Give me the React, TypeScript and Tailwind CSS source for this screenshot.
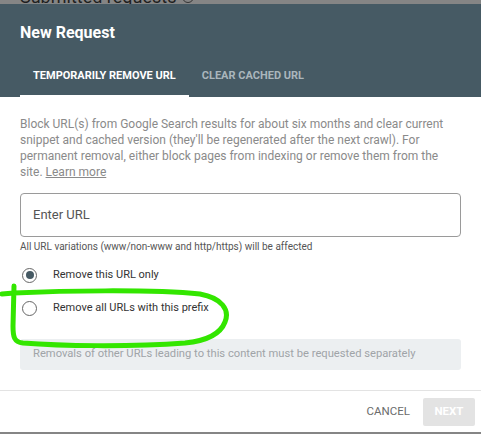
import React from 'react';

export default function App() {
  const tabs = [
    { label: 'TEMPORARILY REMOVE URL', active: true },
    { label: 'CLEAR CACHED URL', active: false },
  ];

  const options = [
    { label: 'Remove this URL only', checked: true },
    { label: 'Remove all URLs with this prefix', checked: false },
  ];

  return (
    <div
      className="relative w-[481px] h-[434px] overflow-hidden bg-[#858585]"
      style={{ fontFamily: 'Roboto, "Noto Sans", Arial, sans-serif' }}
    >
      {/* backdrop page peeking above the dialog */}
      <div className="h-[4px] overflow-hidden pl-[20px]">
        <div className="flex items-center gap-[6px] -mt-[12px] text-[18px] leading-[18px] text-[#1f1f1f]">
          <span>Submitted requests</span>
          <span className="w-[12px] h-[12px] rounded-full border border-[#333]" />
        </div>
      </div>

      <div className="bg-white">
        {/* header */}
        <div className="bg-[#465a64] pl-[20px]">
          <div className="pt-[17px] mb-[12px] text-[16px] leading-[24px] font-bold text-white">
            New Request
          </div>
          <div className="flex h-[40px]">
            {tabs.map((tab) => (
              <div
                key={tab.label}
                className={
                  tab.active
                    ? 'flex items-center px-[13px] text-[11px] font-bold text-white border-b-2 border-white'
                    : 'flex items-center px-[13px] text-[11px] font-bold text-[#aab6bc] border-b-2 border-transparent'
                }
              >
                {tab.label}
              </div>
            ))}
          </div>
        </div>

        {/* body */}
        <div className="px-[20px] pt-[19px] pb-[20px]">
          <p className="text-[12px] leading-[16px] text-[#8a8a8a]">
            Block URL(s) from Google Search results for about six months and clear current snippet and
            cached version (they'll be regenerated after the next crawl). For permanent removal, either
            block pages from indexing or remove them from the site. <span className="underline">Learn more</span>
          </p>

          <div className="mt-[13px] h-[44px] flex items-center px-[12px] border border-[#9a9a9a] rounded-[4px] text-[13px] text-[#555]">
            Enter URL
          </div>
          <div className="mt-[4px] text-[10px] leading-[12px] text-[#555]">
            All URL variations (www/non-www and http/https) will be affected
          </div>

          <div className="mt-[12px] flex flex-col gap-[13px]">
            {options.map((opt) => (
              <div key={opt.label} className="flex items-center h-[20px] pl-[2px]">
                <span className="w-[15px] h-[15px] rounded-full border border-[#666] flex items-center justify-center">
                  {opt.checked && <span className="w-[8px] h-[8px] rounded-full bg-[#465a64]" />}
                </span>
                <span className="ml-[16px] text-[11px] text-[#333]">{opt.label}</span>
              </div>
            ))}
          </div>

          <div className="mt-[21px] h-[31px] flex items-center px-[13px] rounded-[3px] bg-[#eceff1] text-[11.2px] text-[#a0a4a8]">
            Removals of other URLs leading to this content must be requested separately
          </div>
        </div>

        {/* footer */}
        <div className="h-[42px] border-t border-[#e3e3e3] flex items-center justify-end pr-[6px] gap-[1px]">
          <div className="px-[12px] text-[11.5px] text-[#6b6b6b]">CANCEL</div>
          <div className="w-[52px] h-[28px] flex items-center justify-center rounded-[2px] bg-[#e3e3e3] text-[11.5px] font-bold text-white">
            NEXT
          </div>
        </div>
      </div>

      {/* hand-drawn highlight */}
      <svg className="absolute left-0 top-0 pointer-events-none" width="481" height="434" viewBox="0 0 481 434">
        <path
          d="M14 286 L13 326 C13 337 14 342 23 343 C60 346 130 347 185 343 C205 341 220 335 225 322 C230 310 222 298 200 294 C150 289 60 291 14 293 L2 294"
          fill="none"
          stroke="#33e600"
          strokeWidth="5"
          strokeLinecap="round"
          strokeLinejoin="round"
        />
      </svg>
    </div>
  );
}
